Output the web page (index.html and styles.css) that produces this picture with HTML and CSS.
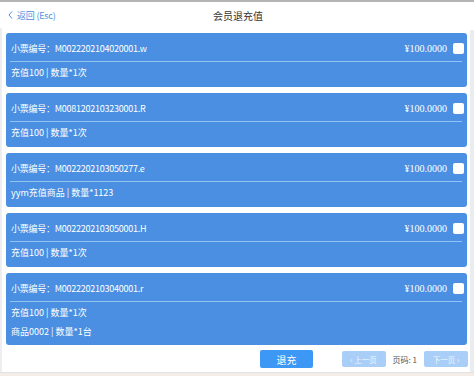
FILE: index.html
```html
<!DOCTYPE html>
<html lang="zh">
<head>
<meta charset="utf-8">
<link rel="stylesheet" href="styles.css">
</head>
<body>
<div class="topbar"></div>
<header class="header">
  <a class="back"><svg class="chev" width="5" height="8" viewBox="0 0 5 8"><polyline points="4,0.5 1,4 4,7.5" fill="none" stroke="#4a90e2" stroke-width="1"/></svg>返回 (Esc)</a>
  <h1 class="title">会员退充值</h1>
  <span></span>
</header>
<div class="main">
  <div class="list">
    <div class="card">
      <div class="card-head"><span class="no">小票编号：M0022202104020001.w</span><span class="right"><span class="price">¥100.0000</span><span class="check"></span></span></div>
      <div class="card-body"><div>充值100 | 数量*1次</div></div>
    </div>
    <div class="card">
      <div class="card-head"><span class="no">小票编号：M0081202103230001.R</span><span class="right"><span class="price">¥100.0000</span><span class="check"></span></span></div>
      <div class="card-body"><div>充值100 | 数量*1次</div></div>
    </div>
    <div class="card">
      <div class="card-head"><span class="no">小票编号：M0022202103050277.e</span><span class="right"><span class="price">¥100.0000</span><span class="check"></span></span></div>
      <div class="card-body"><div>yym充值商品 | 数量*1123</div></div>
    </div>
    <div class="card">
      <div class="card-head"><span class="no">小票编号：M0022202103050001.H</span><span class="right"><span class="price">¥100.0000</span><span class="check"></span></span></div>
      <div class="card-body"><div>充值100 | 数量*1次</div></div>
    </div>
    <div class="card">
      <div class="card-head"><span class="no">小票编号：M0022202103040001.r</span><span class="right"><span class="price">¥100.0000</span><span class="check"></span></span></div>
      <div class="card-body"><div>充值100 | 数量*1次</div><div>商品0002 | 数量*1台</div></div>
    </div>
    <footer class="footer">
      <button class="submit">退充</button>
      <div class="pager">
        <button class="pg">‹ 上一页</button>
        <span class="pnum">页码: 1</span>
        <button class="pg">下一页 ›</button>
      </div>
    </footer>
  </div>
  <div class="track"></div>
</div>
<div class="bottombar"></div>
</body>
</html>
```
FILE: styles.css
```css
* { box-sizing: border-box; }
html, body { margin: 0; padding: 0; }
body {
  width: 474px;
  height: 376px;
  overflow: hidden;
  background: #ffffff;
  font-family: "Noto Sans CJK SC", "Noto Sans", sans-serif;
  display: flex;
  flex-direction: column;
}
.topbar { height: 2px; background: #b4b4b4; flex: none; }
.header {
  height: 26px;
  flex: none;
  display: grid;
  grid-template-columns: 1fr auto 1fr;
  align-items: center;
  padding: 0 8px;
  background: #fff;
}
.back {
  color: #4a90e2;
  font-size: 9px;
  display: flex;
  align-items: center;
  gap: 4px;
  letter-spacing: -0.2px;
}
.title {
  margin: 0;
  font-size: 10px;
  font-weight: normal;
  color: #333;
  padding-left: 2px;
}
.main {
  flex: 1;
  display: flex;
  min-height: 0;
  border-left: 2px solid #eceef1;
}
.list {
  flex: 1;
  padding: 5px 3px 0 4px;
  display: flex;
  flex-direction: column;
  gap: 6px;
}
.track { width: 4px; background: #e9ecf0; margin-top: 2px; }
.card {
  background: #4a8fe1;
  border-radius: 3px;
  color: #fff;
  font-size: 9px;
}
.card-head {
  height: 29px;
  padding-top: 2px;
  margin: 0 5px 0 4px;
  padding-left: 1px;
  border-bottom: 1px solid #93c3f4;
  display: flex;
  align-items: center;
  justify-content: space-between;
}
.no { letter-spacing: -0.25px; }
.right { display: flex; align-items: center; gap: 6px; margin-right: -2px; }
.price { font-family: "Liberation Serif", serif; font-size: 10px; }
.check {
  width: 11px;
  height: 11px;
  background: #fff;
  border-radius: 2px;
}
.card-body {
  padding: 1px 5px 5px 5px;
  line-height: 19px;
}
.card-body div + div { margin-top: 1px; line-height: 17px; }
.footer {
  display: flex;
  align-items: center;
  padding: 0 0 0 254px;
  margin-top: -1px;
}
.submit {
  width: 53px;
  height: 18px;
  border: 0;
  border-radius: 2px;
  background: #3c97f5;
  color: #fff;
  font-family: inherit;
  font-size: 10px;
  padding: 0;
}
.pager {
  margin-left: auto;
  display: flex;
  align-items: center;
  gap: 7px;
  margin-right: -1px;
}
.pg {
  width: 44px;
  height: 16px;
  border: 0;
  border-radius: 2px;
  background: #a9cff8;
  color: #eef6fe;
  font-family: inherit;
  font-size: 7.5px;
  padding: 0;
}
.pnum { font-size: 8px; color: #555; }
.bottombar { height: 4px; background: #f4ece6; border-top: 1px solid #e2e2e2; flex: none; }
```
